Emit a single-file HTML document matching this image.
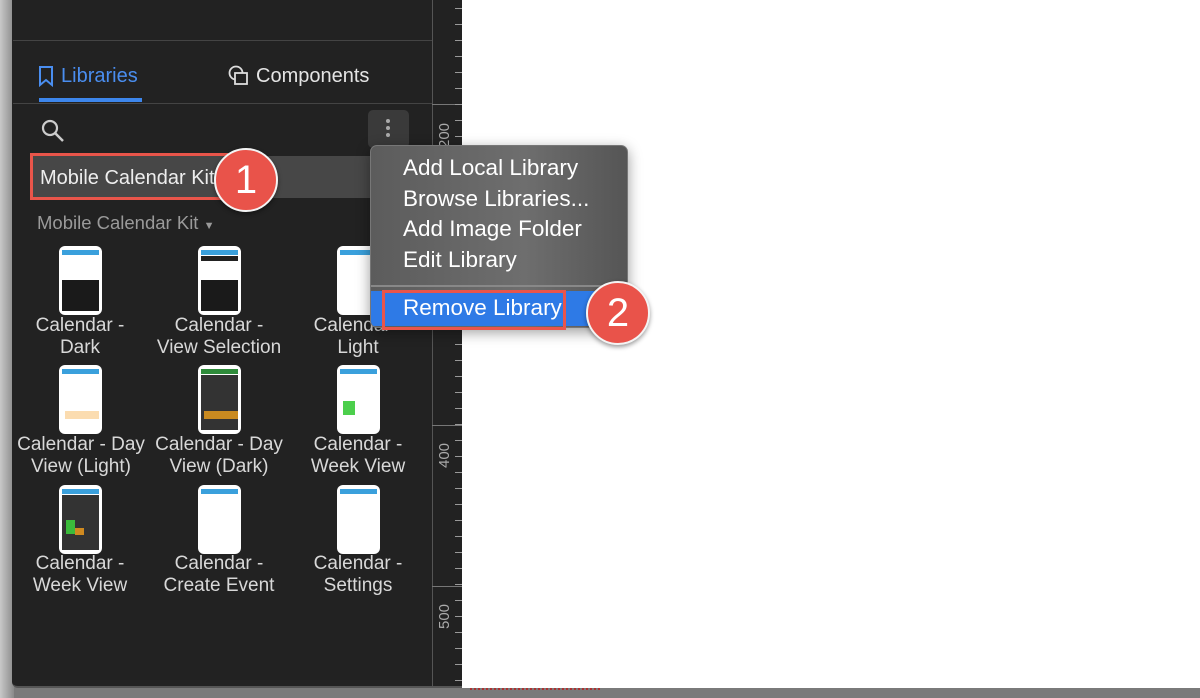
<!DOCTYPE html>
<html><head><meta charset="utf-8"><style>
*{margin:0;padding:0;box-sizing:border-box}
body{width:1200px;height:698px;overflow:hidden;position:relative;background:linear-gradient(#909090,#7a7a7a);font-family:"Liberation Sans",sans-serif}
.abs{position:absolute}
.lbl{position:absolute;width:140px;text-align:center;color:#d8d8d8;font-size:19px;line-height:22px}
.th{position:absolute;width:43px;height:69px;background:#fff;border-radius:6px;overflow:hidden}
.th .bar{position:absolute;left:3px;right:3px;top:4px;height:5px;background:#3aa0dc}
.tick{position:absolute;left:455px;width:7px;height:1px;background:#9a9a9a}
</style></head><body>
<div class="abs" style="left:0;top:0;width:14px;height:698px;background:linear-gradient(90deg,#c8c8c8,#8a8a8a)"></div>
<div class="abs" style="left:12px;top:0;width:1188px;height:688px;background:#222;border-bottom:2px solid #555;border-radius:0 0 0 6px"></div>
<div class="abs" style="left:462px;top:0;width:738px;height:688px;background:#fff"></div>
<div class="abs" style="left:470px;top:688px;width:130px;height:4px;border-top:2px dotted #a33"></div>
<div class="abs" style="left:432px;top:0;width:1px;height:688px;background:#555"></div>
<div class="abs" style="left:432px;top:104px;width:30px;height:1px;background:#777"></div>
<div class="abs" style="left:432px;top:425px;width:30px;height:1px;background:#777"></div>
<div class="abs" style="left:432px;top:586px;width:30px;height:1px;background:#777"></div>
<div id="ticks"></div>
<div class="abs" style="left:436px;top:112px;width:20px;height:36px;color:#aaa;font-size:15px;writing-mode:vertical-rl;transform:rotate(180deg)">200</div>
<div class="abs" style="left:436px;top:432px;width:20px;height:36px;color:#aaa;font-size:15px;writing-mode:vertical-rl;transform:rotate(180deg)">400</div>
<div class="abs" style="left:436px;top:593px;width:20px;height:36px;color:#aaa;font-size:15px;writing-mode:vertical-rl;transform:rotate(180deg)">500</div>
<div class="abs" style="left:13px;top:40px;width:419px;height:1px;background:#444"></div>
<div class="abs" style="left:13px;top:103px;width:419px;height:1px;background:#444"></div>
<svg class="abs" style="left:38px;top:65px" width="16" height="22" viewBox="0 0 16 22"><path d="M2 2H14V20L8 15L2 20Z" fill="none" stroke="#4a8ef0" stroke-width="2"/></svg>
<div class="abs" style="left:61px;top:65px;color:#4a8ef0;font-size:20px">Libraries</div>
<div class="abs" style="left:39px;top:98px;width:103px;height:4px;background:#3d86ec"></div>
<svg class="abs" style="left:227px;top:64px" width="24" height="24" viewBox="0 0 24 24"><circle cx="9" cy="9" r="6.5" fill="none" stroke="#ddd" stroke-width="1.8"/><rect x="8" y="9" width="12" height="11" fill="#222" stroke="#ddd" stroke-width="1.8"/></svg>
<div class="abs" style="left:256px;top:65px;color:#e4e4e4;font-size:20px">Components</div>
<svg class="abs" style="left:40px;top:118px" width="26" height="26" viewBox="0 0 26 26"><circle cx="10" cy="10" r="7" fill="none" stroke="#ccc" stroke-width="2.2"/><path d="M15 15L23 23" stroke="#ccc" stroke-width="2.5"/></svg>
<div class="abs" style="left:368px;top:110px;width:41px;height:38px;background:#3a3a3a;border-radius:5px"></div>
<div class="abs" style="left:386px;top:119px;width:4px;height:4px;border-radius:2px;background:#aaa;box-shadow:0 7px 0 #aaa,0 14px 0 #aaa"></div>
<div class="abs" style="left:30px;top:156px;width:345px;height:42px;background:#474747"></div>
<div class="abs" style="left:30px;top:153px;width:198px;height:47px;border:3px solid #e9554a"></div>
<div class="abs" style="left:40px;top:167px;color:#eee;font-size:20px">Mobile Calendar Kit</div>
<div class="abs" style="left:37px;top:212px;color:#9a9a9a;font-size:18.5px">Mobile Calendar Kit <span style="font-size:11px">▼</span></div>
<div class="th" style="left:59px;top:246px"><div class="bar"></div><div class="abs" style="left:3px;right:3px;top:34px;bottom:4px;background:#1a1a1a"></div></div>
<div class="th" style="left:198px;top:246px"><div class="bar"></div><div class="abs" style="left:3px;right:3px;top:10px;height:5px;background:#222"></div><div class="abs" style="left:3px;right:3px;top:34px;bottom:4px;background:#1a1a1a"></div></div>
<div class="th" style="left:337px;top:246px"><div class="bar"></div></div>
<div class="th" style="left:59px;top:365px"><div class="bar"></div><div class="abs" style="left:6px;right:3px;top:46px;height:8px;background:#fbdcb0"></div></div>
<div class="th" style="left:198px;top:365px"><div class="bar" style="background:#2e8b3a"></div><div class="abs" style="left:3px;right:3px;top:10px;bottom:4px;background:#333"></div><div class="abs" style="left:6px;right:3px;top:46px;height:8px;background:#c98a20"></div></div>
<div class="th" style="left:337px;top:365px"><div class="bar"></div><div class="abs" style="left:6px;width:12px;top:36px;height:14px;background:#4ccf4c"></div></div>
<div class="th" style="left:59px;top:485px"><div class="bar"></div><div class="abs" style="left:3px;right:3px;top:10px;bottom:4px;background:#333"></div><div class="abs" style="left:7px;width:9px;top:35px;height:14px;background:#3bbb3b"></div><div class="abs" style="left:16px;width:9px;top:43px;height:7px;background:#d08a20"></div></div>
<div class="th" style="left:198px;top:485px"><div class="bar"></div></div>
<div class="th" style="left:337px;top:485px"><div class="bar"></div></div>
<div class="lbl" style="left:10px;top:315px">Calendar -<br>Dark</div>
<div class="lbl" style="left:149px;top:315px">Calendar -<br>View Selection</div>
<div class="lbl" style="left:288px;top:315px">Calendar -<br>Light</div>
<div class="lbl" style="left:8px;top:434px;width:146px">Calendar - Day<br>View (Light)</div>
<div class="lbl" style="left:147px;top:434px;width:144px">Calendar - Day<br>View (Dark)</div>
<div class="lbl" style="left:288px;top:434px">Calendar -<br>Week View</div>
<div class="lbl" style="left:10px;top:553px">Calendar -<br>Week View</div>
<div class="lbl" style="left:149px;top:553px">Calendar -<br>Create Event</div>
<div class="lbl" style="left:288px;top:553px">Calendar -<br>Settings</div>
<div class="abs" style="left:370px;top:145px;width:258px;height:183px;background:linear-gradient(90deg,#5c5c5c,#6e6e6e 60%,#555);border:1px solid #777;border-radius:7px;box-shadow:0 4px 14px rgba(0,0,0,.4);overflow:hidden">
<div class="abs" style="left:32px;top:7px;color:#fff;font-size:22.5px;line-height:30.5px;white-space:nowrap">Add Local Library<br>Browse Libraries...<br>Add Image Folder<br>Edit Library</div>
<div class="abs" style="left:0;right:0;top:139px;height:2px;background:#888"></div>
<div class="abs" style="left:0;right:0;top:145px;height:35px;background:#2e7ae6"></div>
</div>
<div class="abs" style="left:382px;top:290px;width:184px;height:40px;border:3px solid #e9554a"></div>
<div class="abs" style="left:403px;top:295px;color:#fff;font-size:22.5px;white-space:nowrap">Remove Library</div>
<div class="abs" style="left:214px;top:148px;width:64px;height:64px;border-radius:50%;background:#e9534a;border:2px solid #f4f4f4;box-shadow:0 2px 5px rgba(0,0,0,.4);color:#fff;font-size:40px;text-align:center;line-height:60px">1</div>
<div class="abs" style="left:586px;top:281px;width:64px;height:64px;border-radius:50%;background:#e9534a;border:2px solid #f4f4f4;box-shadow:0 2px 5px rgba(0,0,0,.4);color:#fff;font-size:40px;text-align:center;line-height:60px">2</div>
<script>
var h='';for(var y=8;y<688;y+=16){h+='<div class="tick" style="top:'+y+'px"></div>';}
document.getElementById('ticks').innerHTML=h;
</script>
</body></html>
